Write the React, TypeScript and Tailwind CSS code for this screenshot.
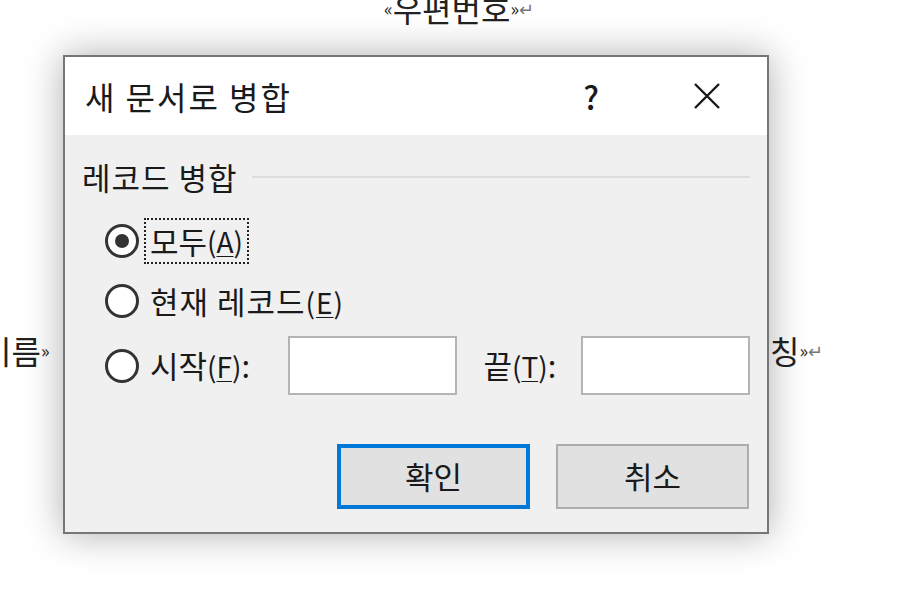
import React from "react"

const font = { fontFamily: '"Noto Sans CJK KR", "Noto Sans", sans-serif' }

// mnemonic letter with underline, e.g. (A)
function Key({ k }: { k: string }) {
  return (
    <span className="text-[28px]">
      (<span className="underline underline-offset-[3px] decoration-1">{k}</span>)
    </span>
  )
}

function Radio({ checked }: { checked?: boolean }) {
  return (
    <span className="flex h-[34px] w-[34px] shrink-0 items-center justify-center rounded-full border-[3px] border-[#333333] bg-white">
      {checked && <span className="h-[14px] w-[14px] rounded-full bg-[#333333]" />}
    </span>
  )
}

function TextBox() {
  return <div className="h-[59px] w-[170px] border-2 border-[#b4b4b4] bg-white" />
}

export default function App() {
  return (
    <div className="relative h-[606px] w-[900px] overflow-hidden bg-white text-[#1a1a1a]" style={font}>
      {/* document behind the dialog */}
      <div className="absolute left-[384px] top-[-12px] flex items-center text-[32px] leading-[40px] text-[#222]">
        <span className="text-[18px]">«</span>우편번호<span className="text-[18px]">»</span>
        <span className="text-[18px] text-[#777]">↵</span>
      </div>
      <div className="absolute left-[-18px] top-[330px] flex items-center text-[32px] leading-[40px] text-[#222]">
        이름<span className="text-[18px]">»</span>
      </div>
      <div className="absolute left-[770px] top-[330px] flex items-center text-[32px] leading-[40px] text-[#222]">
        칭<span className="text-[18px]">»</span>
        <span className="text-[18px] text-[#777]">↵</span>
      </div>

      {/* dialog window */}
      <div className="absolute left-[63px] top-[55px] flex h-[479px] w-[706px] flex-col border-2 border-[#767676] bg-[#f0f0f0] shadow-[0_0_36px_rgba(0,0,0,0.32)]">
        <div className="flex h-[78px] shrink-0 items-center bg-white pl-[20px]">
          <span className="text-[32px] tracking-[2px]">새 문서로 병합</span>
          <span className="ml-auto mr-[94px] text-[32px] font-medium">?</span>
          <svg width="28" height="28" viewBox="0 0 28 28" className="mr-[46px]">
            <path d="M2 2 L26 26 M26 2 L2 26" stroke="#1a1a1a" strokeWidth="2.4" fill="none" />
          </svg>
        </div>

        <div className="flex flex-1 flex-col px-[17px] pt-[22px]">
          <div className="flex items-center gap-[14px]">
            <span className="text-[31px] leading-[40px] tracking-[1px]">레코드 병합</span>
            <div className="h-[2px] flex-1 bg-[#dcdcdc]" />
          </div>

          <div className="mt-[21px] flex flex-col gap-[14px] pl-[23px] text-[31px]">
            <div className="flex h-[46px] items-center gap-[5px]">
              <Radio checked />
              <span className="flex h-[46px] items-center border-2 border-dotted border-[#222] px-[4px]">
                모두<Key k="A" />
              </span>
            </div>
            <div className="flex h-[46px] items-center gap-[11px]">
              <Radio />
              <span className="tracking-[1px]">
                현재 레코드<Key k="E" />
              </span>
            </div>
            <div className="-mt-[2px] flex h-[59px] items-center">
              <Radio />
              <span className="ml-[11px] w-[139px]">
                시작<Key k="F" />:
              </span>
              <TextBox />
              <span className="ml-[26px] w-[98px]">
                끝<Key k="T" />:
              </span>
              <TextBox />
            </div>
          </div>

          <div className="mt-[49px] flex justify-end gap-[26px] pr-[1px]">
            <button className="h-[65px] w-[193px] border-[4px] border-[#0078d7] bg-[#e1e1e1] text-[31px]">
              확인
            </button>
            <button className="h-[65px] w-[193px] border-2 border-[#adadad] bg-[#e1e1e1] text-[31px]">
              취소
            </button>
          </div>
        </div>
      </div>
    </div>
  )
}
